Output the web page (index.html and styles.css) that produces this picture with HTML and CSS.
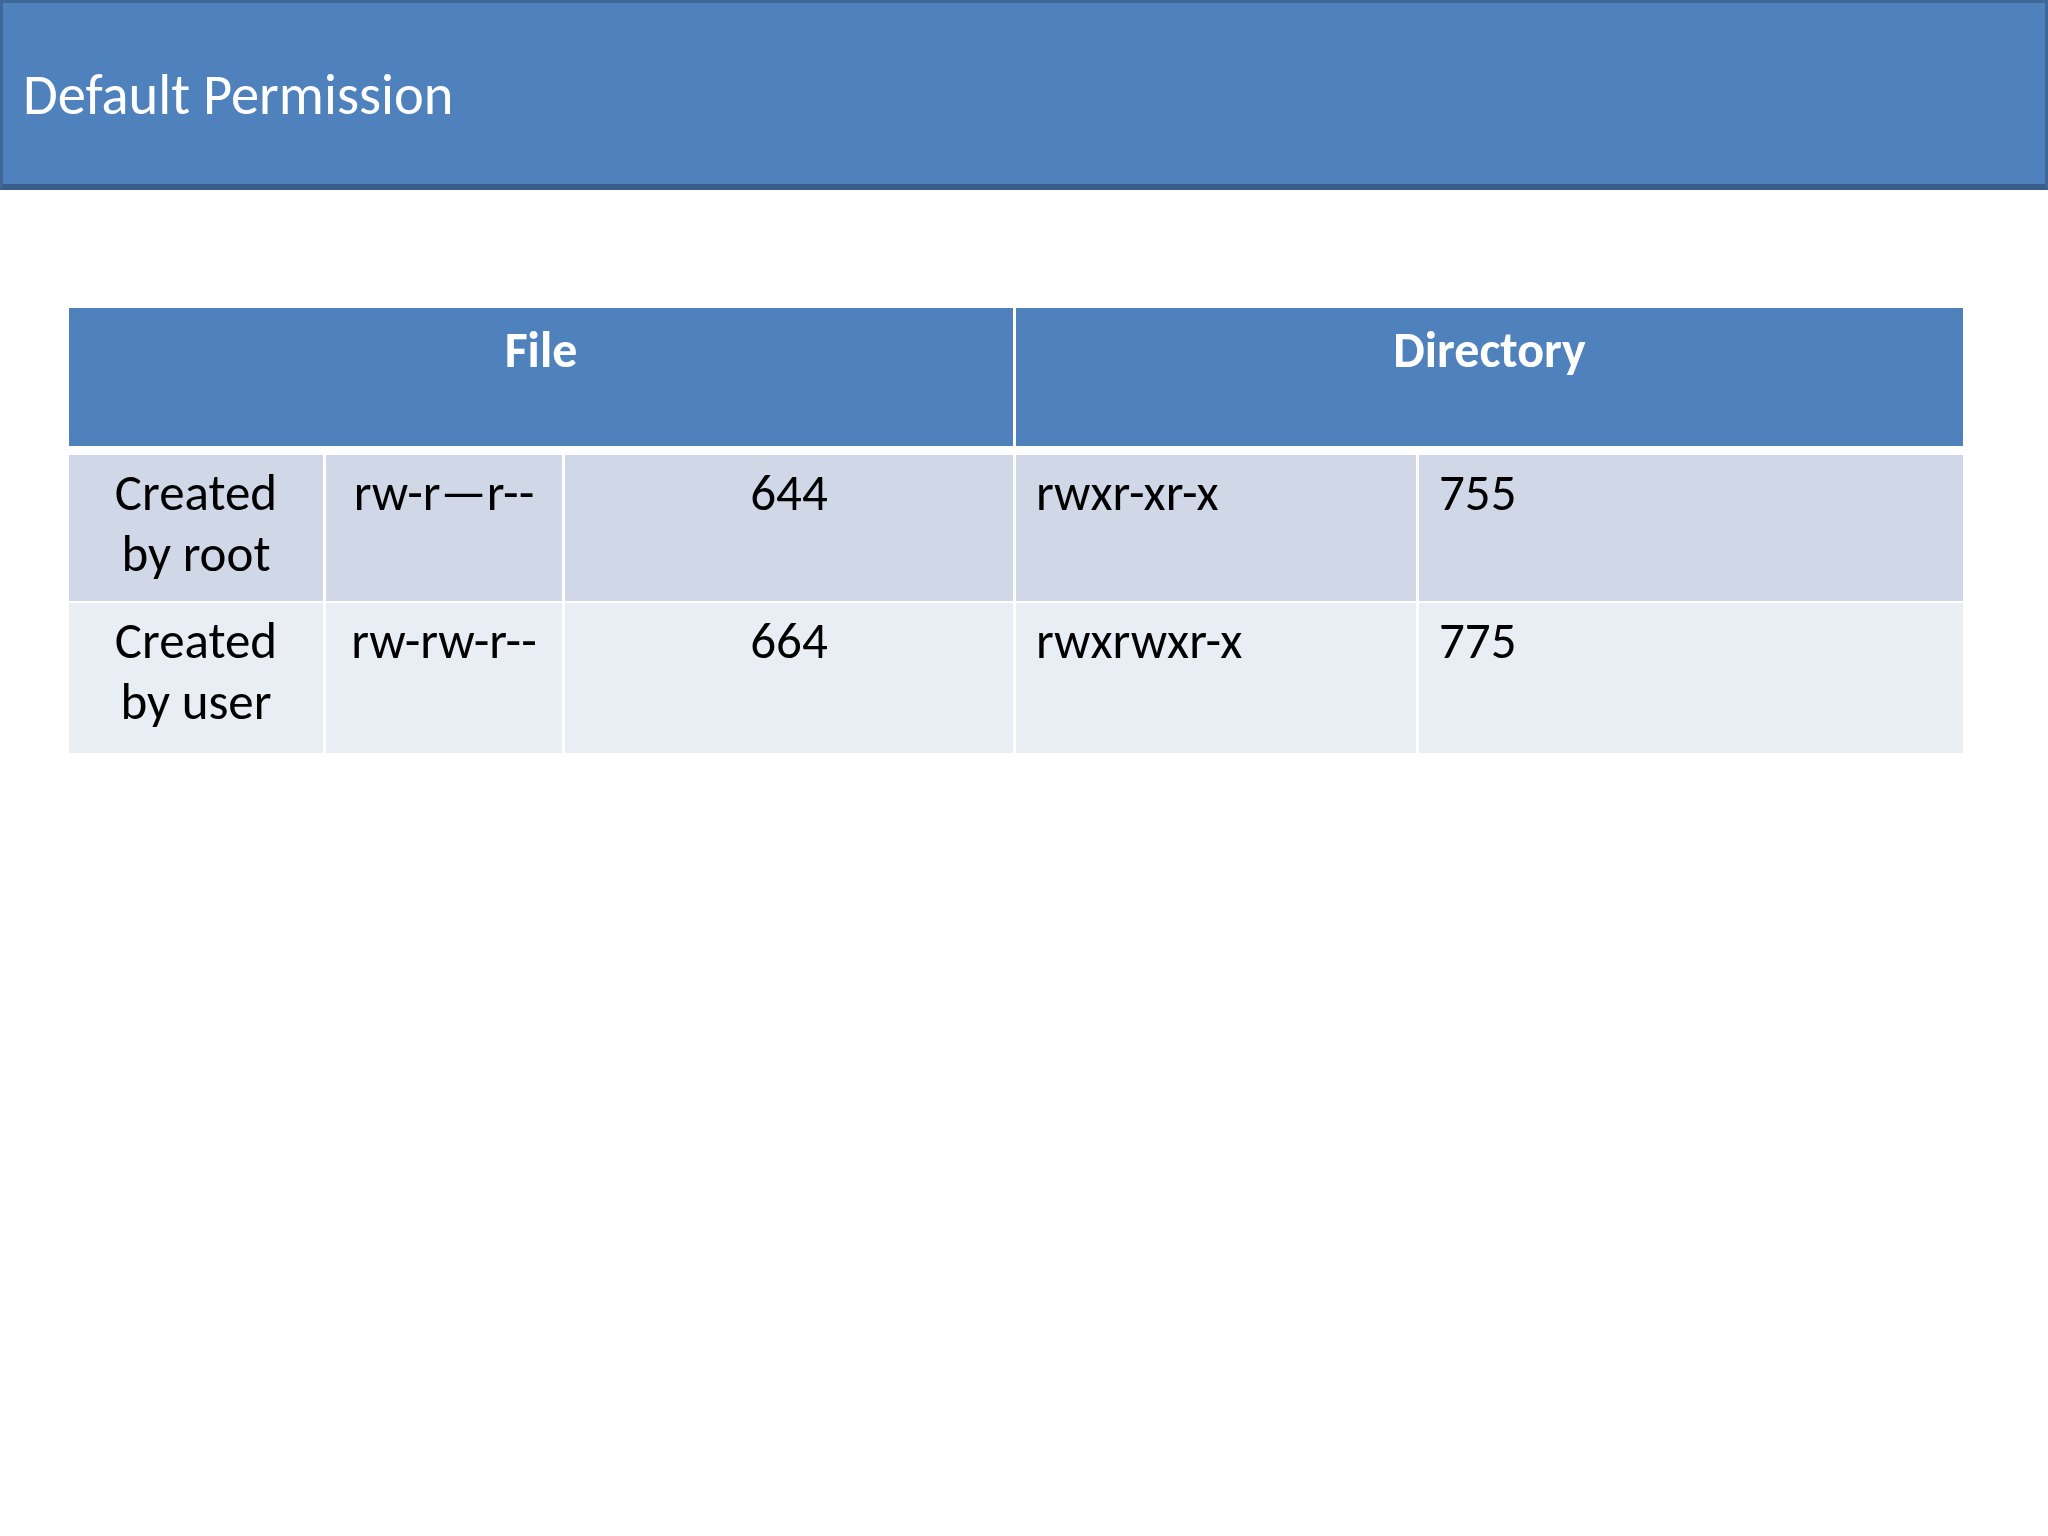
FILE: index.html
```html
<!DOCTYPE html>
<html lang="en">
<head>
<meta charset="utf-8">
<title>Default Permission</title>
<link rel="stylesheet" href="styles.css">
</head>
<body>
<header class="banner">
  <h1 class="title">Default Permission</h1>
</header>
<main class="content">
  <div class="ptable">
    <div class="th span-file">File</div>
    <div class="th span-dir">Directory</div>

    <div class="td odd center">Created<br>by root</div>
    <div class="td odd center">rw-r—r--</div>
    <div class="td odd center">644</div>
    <div class="td odd">rwxr-xr-x</div>
    <div class="td odd">755</div>

    <div class="td even center">Created<br>by user</div>
    <div class="td even center">rw-rw-r--</div>
    <div class="td even center">664</div>
    <div class="td even">rwxrwxr-x</div>
    <div class="td even">775</div>
  </div>
</main>
</body>
</html>
```

FILE: styles.css
```css
html, body {
  margin: 0;
  padding: 0;
  background: #ffffff;
}
body {
  width: 2048px;
  height: 1536px;
  font-family: Carlito, Calibri, Lato, "Open Sans", sans-serif;
  color: #000000;
}
.banner {
  box-sizing: border-box;
  height: 190px;
  background: #4f81bd;
  border: 3px solid #3f6797;
  border-bottom: 6px solid #385d8a;
  padding: 58px 0 0 20px;
}
.title {
  margin: 0;
  font-weight: 400;
  font-size: 56.5px;
  line-height: 1.2;
  color: #ffffff;
}
.content {
  padding: 118px 0 0 69px;
}
.ptable {
  display: grid;
  grid-template-columns: 254px 236px 448px 400px 544px;
  column-gap: 3px;
  row-gap: 2px;
  width: max-content;
}
.th {
  box-sizing: border-box;
  height: 138px;
  margin-bottom: 7px;
  background: #4f81bd;
  color: #ffffff;
  font-weight: 700;
  font-size: 50px;
  line-height: 60px;
  text-align: center;
  padding: 12px 20px 0;
}
.span-file { grid-column: 1 / 4; }
.span-dir { grid-column: 4 / 6; }
.td {
  box-sizing: border-box;
  font-size: 51px;
  line-height: 61px;
  padding: 7px 20px 0;
}
.odd { background: #d0d8e8; height: 146px; }
.even { background: #e9edf4; height: 150px; }
.center { text-align: center; }
```
